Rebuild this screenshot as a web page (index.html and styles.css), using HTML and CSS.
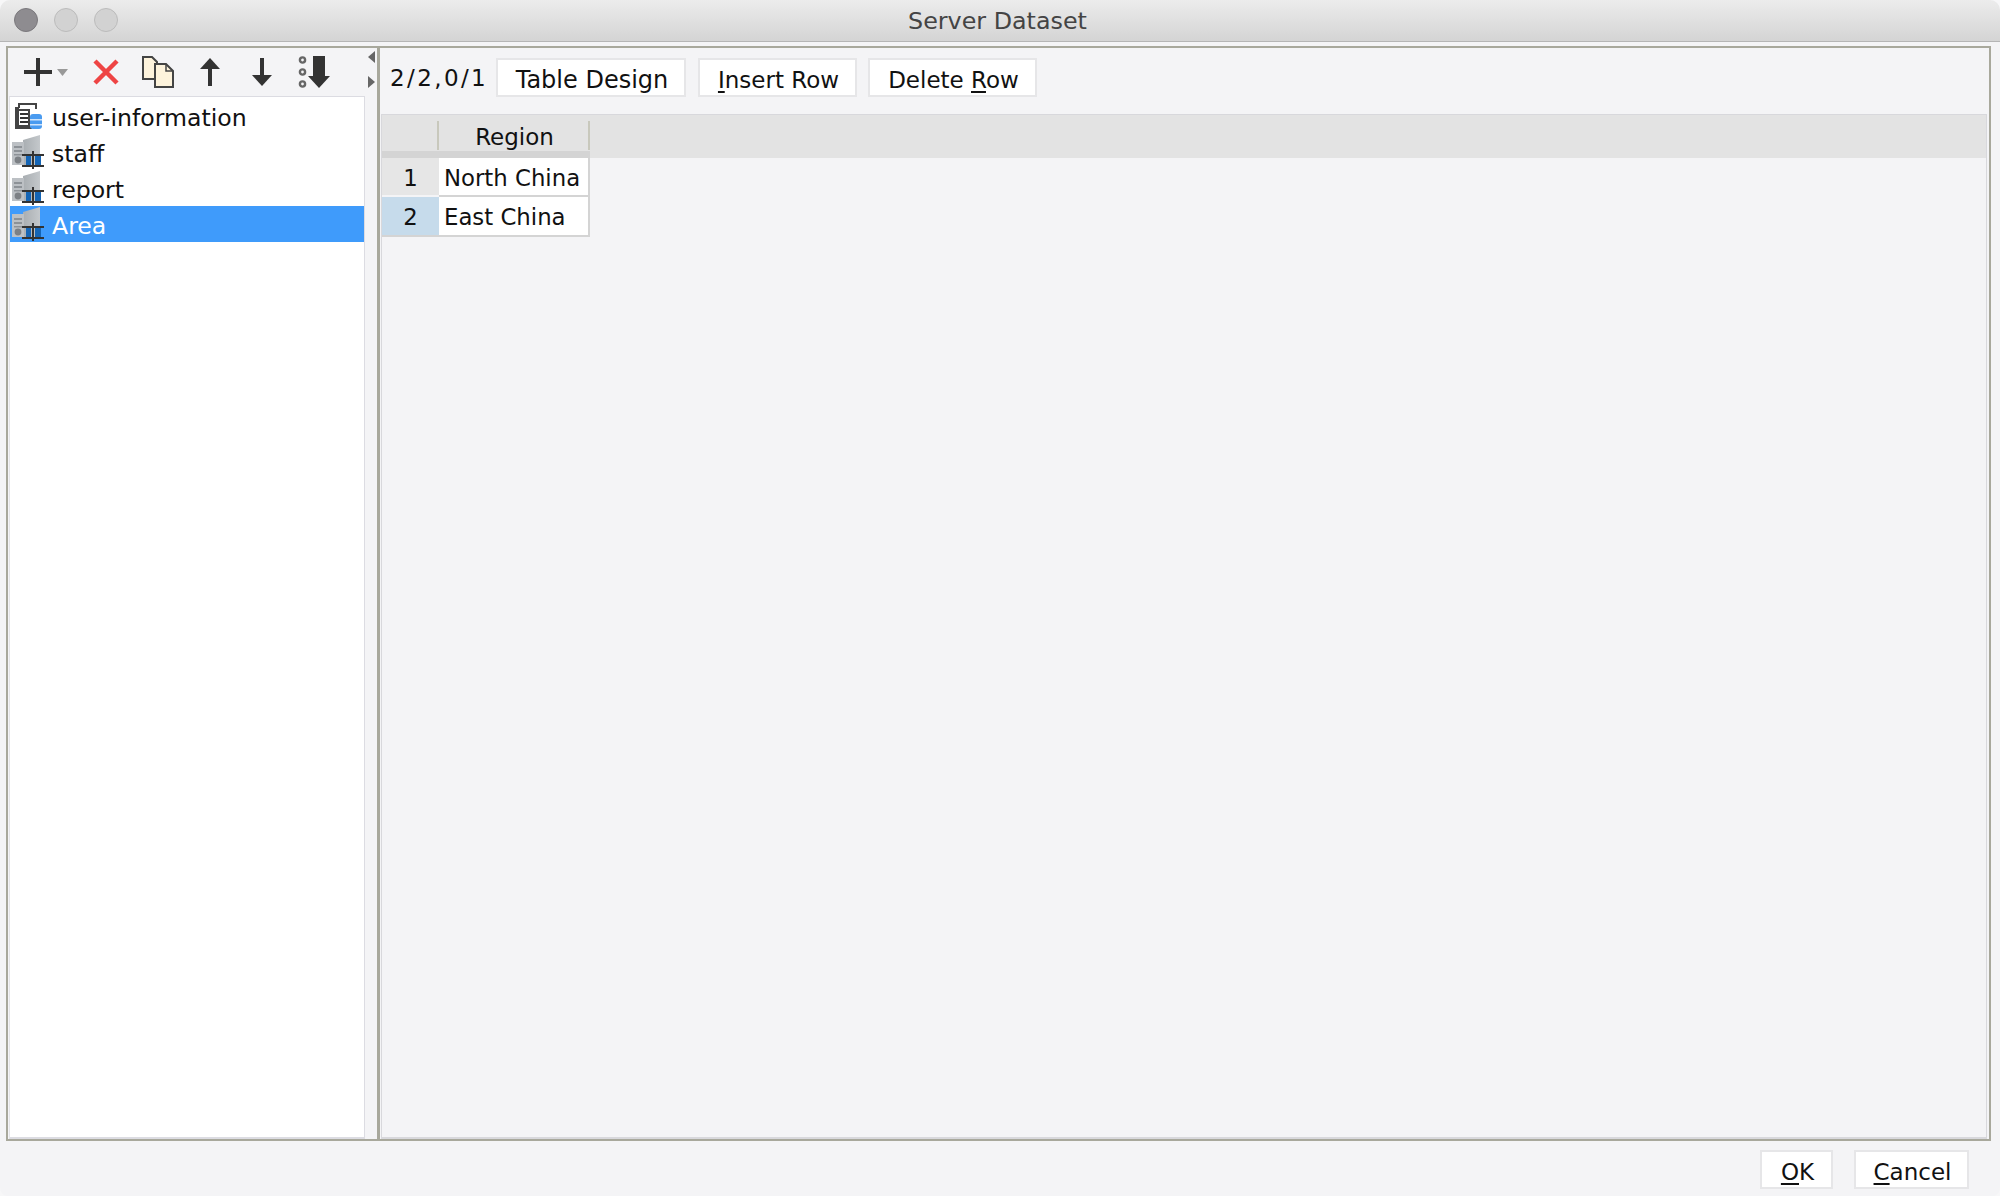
FILE: index.html
```html
<!DOCTYPE html>
<html lang="en">
<head>
<meta charset="utf-8">
<title>Server Dataset</title>
<link rel="stylesheet" href="styles.css">
</head>
<body>
<svg class="defs" width="0" height="0" aria-hidden="true">
  <defs>
    <linearGradient id="server-side" x1="0" y1="0" x2="1" y2="0">
      <stop offset="0" stop-color="#a9aeb2"/>
      <stop offset="1" stop-color="#c4c8cb"/>
    </linearGradient>
    <symbol id="server" viewBox="0 0 32 34">
      <path d="M11 5 L28 0 V30 H11 Z" fill="url(#server-side)"/>
      <path d="M0 7 H12 V30 H0 Z" fill="#bcc0c4"/>
      <rect x="2" y="11" width="8" height="2" fill="#8d9297"/>
      <rect x="2" y="15" width="8" height="2" fill="#8d9297"/>
      <rect x="2" y="19" width="8" height="1.5" fill="#8d9297"/>
      <circle cx="6" cy="25" r="3.4" fill="#7c8085"/>
      <rect x="14" y="20" width="5" height="10" fill="#1565b5"/>
      <rect x="23" y="20" width="6" height="10" fill="#1565b5"/>
      <rect x="10" y="19" width="22" height="2" fill="#333"/>
      <rect x="10" y="30" width="22" height="2" fill="#333"/>
      <rect x="20" y="16" width="2" height="18" fill="#333"/>
    </symbol>
  </defs>
</svg>
<div class="window">
  <header class="titlebar">
    <div class="lights">
      <span class="light light-active"></span>
      <span class="light"></span>
      <span class="light"></span>
    </div>
    <h1 class="title">Server Dataset</h1>
  </header>
  <main class="frame">
    <section class="left">
      <div class="icons">
        <span class="cell cell-add">
          <svg width="44" height="32" viewBox="0 0 44 32"><path d="M0 16H28M14 2V30" stroke="#333" stroke-width="4" fill="none"/><path d="M33 13H44L38.5 20Z" fill="#999"/></svg>
        </span>
        <span class="cell">
          <svg width="28" height="28" viewBox="0 0 28 28"><path d="M3 3L25 25M25 3L3 25" stroke="#ee4444" stroke-width="4.5" fill="none"/></svg>
        </span>
        <span class="cell">
          <svg width="32" height="32" viewBox="0 0 32 32"><path d="M1 1H10L15 6V23H1Z" fill="#fdf3dc" stroke="#444" stroke-width="2"/><path d="M13 8H24L31 15V31H13Z" fill="#fdf3dc" stroke="#444" stroke-width="2"/><path d="M24 8V15H31" fill="none" stroke="#444" stroke-width="1.5"/></svg>
        </span>
        <span class="cell">
          <svg width="20" height="28" viewBox="0 0 20 28"><path d="M10 0L20 11H0Z" fill="#333"/><rect x="8" y="8" width="4" height="20" fill="#333"/></svg>
        </span>
        <span class="cell">
          <svg width="20" height="28" viewBox="0 0 20 28"><path d="M10 28L20 17H0Z" fill="#333"/><rect x="8" y="0" width="4" height="20" fill="#333"/></svg>
        </span>
        <span class="cell">
          <svg width="32" height="32" viewBox="0 0 32 32"><g fill="none" stroke="#666" stroke-width="2.4"><circle cx="4.5" cy="4" r="2.6"/><circle cx="4.5" cy="16" r="2.6"/><circle cx="4.5" cy="28" r="2.6"/></g><rect x="15" y="0" width="12" height="22" fill="#333"/><path d="M21 32L32 20H10Z" fill="#333"/></svg>
        </span>
      </div>
      <ul class="list">
        <li class="item">
          <svg class="item-icon" width="32" height="28" viewBox="0 0 32 28"><path d="M7 6H4V26H20M7 6V2H24V7" fill="none" stroke="#444" stroke-width="2"/><path d="M8 8H17V24H6V8Z" fill="#fff" stroke="#444" stroke-width="2"/><rect x="8" y="11" width="8" height="2" fill="#333"/><rect x="8" y="15" width="8" height="2" fill="#333"/><rect x="8" y="19" width="8" height="2" fill="#333"/><rect x="18" y="12" width="12" height="15" rx="3" fill="#4a9bf0"/><rect x="18" y="17" width="12" height="1.5" fill="#cfe4fb"/><rect x="18" y="22" width="12" height="1.5" fill="#cfe4fb"/></svg>
          <span class="item-text">user-information</span>
        </li>
        <li class="item"><svg class="item-icon" width="32" height="34"><use href="#server"/></svg><span class="item-text">staff</span></li>
        <li class="item"><svg class="item-icon" width="32" height="34"><use href="#server"/></svg><span class="item-text">report</span></li>
        <li class="item item-selected"><svg class="item-icon" width="32" height="34"><use href="#server"/></svg><span class="item-text">Area</span></li>
      </ul>
      <div class="grip">
        <span class="grip-left"></span>
        <span class="grip-right"></span>
      </div>
    </section>
    <section class="right">
      <div class="actions">
        <span class="counter">2/2,0/1</span>
        <button class="btn btn-design"><span>Table Design</span></button>
        <button class="btn btn-insert"><span><u>I</u>nsert Row</span></button>
        <button class="btn btn-delete"><span>Delete <u>R</u>ow</span></button>
      </div>
      <div class="grid-box">
        <div class="grid-head">
          <div class="corner"></div>
          <div class="col-head">Region</div>
        </div>
        <div class="grid-row">
          <div class="row-num">1</div>
          <div class="cell-text">North China</div>
        </div>
        <div class="grid-row grid-row-last">
          <div class="row-num row-num-active">2</div>
          <div class="cell-text">East China</div>
        </div>
      </div>
    </section>
  </main>
  <footer class="footer">
    <button class="btn btn-ok"><span><u>O</u>K</span></button>
    <button class="btn btn-cancel"><span><u>C</u>ancel</span></button>
  </footer>
</div>
</body>
</html>
```
FILE: styles.css
```css
* { box-sizing: border-box; }
html, body { margin: 0; height: 100%; background: #f7f7f8; overflow: hidden; }
body { font-family: "DejaVu Sans", sans-serif; color: #111; }
.defs { position: absolute; }

.window {
  width: 2000px; height: 1196px;
  background: #f4f4f6;
  border-radius: 10px 10px 8px 8px;
  display: flex; flex-direction: column;
  overflow: hidden;
}

.titlebar {
  height: 42px; flex: none;
  background: linear-gradient(#ececec, #d4d4d4);
  border-bottom: 1px solid #b5b5b5;
  display: flex; align-items: center; justify-content: center;
  position: relative;
}
.lights { position: absolute; left: 14px; top: 8px; display: flex; gap: 16px; }
.light { width: 24px; height: 24px; border-radius: 50%; background: #d2d2d2; border: 1px solid #bbb; }
.light-active { background: #8e8c90; border-color: #7a787c; }
.title { margin: 0 0 0 -5px; font-size: 23.8px; font-weight: 400; color: #444; }

.frame {
  margin: 4px 9px 0 6px;
  height: 1095px; flex: none;
  border: 2px solid #a8a89c;
  display: flex;
}

.left { width: 369px; flex: none; position: relative; display: flex; flex-direction: column; padding-left: 1px; }
.icons { height: 48px; flex: none; padding-left: 15px; display: flex; align-items: center; }
.cell { width: 52px; display: flex; justify-content: center; align-items: center; }
.cell-add { width: 56px; justify-content: flex-start; }
.list {
  list-style: none; margin: 0; padding: 1px 0 0;
  flex: 1;
  width: 356px;
  background: #fff;
  border: 1px solid #dcdce2;
  border-left-color: #e4e4e8;
  border-width: 1px 1px 2px 1px;
}
.item { height: 36px; display: flex; align-items: center; gap: 8px; padding-left: 2px; font-size: 23.6px; color: #111; }
.item-text { position: relative; top: 2px; }
.item-icon { flex: none; }
.item-selected { background: #3f9bfb; color: #fff; }
.grip { position: absolute; right: 1px; top: 3px; width: 8px; display: flex; flex-direction: column; gap: 13px; }
.grip-left { width: 0; height: 0; border: 6px solid transparent; border-left: 0; border-right: 7px solid #666; }
.grip-right { width: 0; height: 0; border: 6px solid transparent; border-right: 0; border-left: 7px solid #666; }

.right {
  flex: 1; min-width: 0;
  border-left: 3px solid #a8a89c;
  display: flex; flex-direction: column;
}
.actions { height: 66px; flex: none; display: flex; align-items: flex-start; padding: 10px 0 0 9px; }
.counter { font-size: 23px; line-height: 41px; width: 107px; padding-left: 1px; letter-spacing: 2.4px; white-space: nowrap; }

.btn {
  font-family: inherit; font-size: 23px; color: #111;
  height: 39px; padding: 4px 0 0 2px;
  background: #fff;
  border: 2px solid #e6e6e8;
  border-radius: 0;
  display: flex; align-items: center; justify-content: center;
}
.btn u { text-underline-offset: 3px; }
.btn-design { width: 190px; font-size: 24px; }
.btn-insert { width: 159px; margin-left: 12px; }
.btn-delete { width: 169px; margin-left: 11px; }

.grid-box {
  flex: 1;
  margin: 0 2px 0 1px;
  border: 1px solid #d8d8dc;
  border-width: 1px 1px 2px 1px;
}
.grid-head { height: 43px; background: #e3e3e3; display: flex; font-size: 23px; }
.corner { width: 57px; height: 43px; border-bottom: 7px solid #d4d4d4; position: relative; }
.corner::after { content: ""; position: absolute; right: 0; top: 6px; width: 2px; height: 29px; background: #c8c8bc; }
.col-head {
  width: 151px; height: 43px; padding-top: 8px;
  border-bottom: 7px solid #d4d4d4;
  display: flex; align-items: center; justify-content: center;
  position: relative;
}
.col-head::after { content: ""; position: absolute; right: 0; top: 6px; width: 2px; height: 29px; background: #c8c8bc; }
.grid-row { display: flex; height: 39px; font-size: 22.8px; }
.grid-row-last { height: 40px; }
.row-num {
  width: 57px; background: #e6e6e6;
  display: flex; align-items: center; justify-content: center;
  padding-top: 2px;
  border-bottom: 2px solid #f4f4f6;
}
.row-num-active { background: #c6dbeb; border-bottom: 2px solid #d4d4d4; }
.cell-text {
  width: 151px; background: #fff;
  border-right: 2px solid #d4d4d4;
  border-bottom: 2px solid #d4d4d4;
  display: flex; align-items: center;
  padding: 2px 0 0 5px;
  white-space: nowrap;
}

.footer { flex: 1; display: flex; justify-content: flex-end; align-items: flex-start; padding: 9px 31px 0 0; }
.btn-ok { width: 73px; }
.btn-cancel { width: 115px; margin-left: 21px; }
```
